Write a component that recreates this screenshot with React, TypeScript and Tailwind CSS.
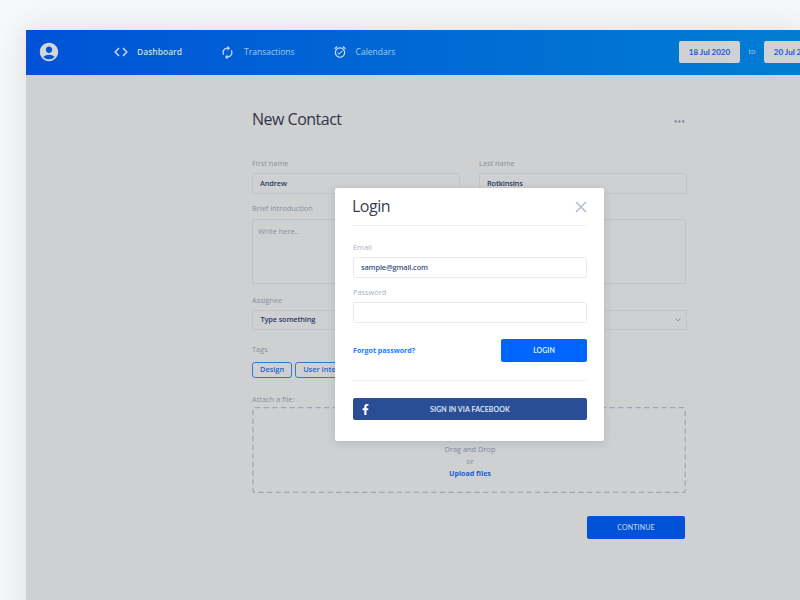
import type { ReactNode } from "react";
import {
  MdAccountCircle,
  MdAlarmOn,
  MdAutorenew,
  MdMoreHoriz,
} from "react-icons/md";
import { FaFacebookF } from "react-icons/fa";

function CodeIcon() {
  return (
    <svg
      className="h-[10px] w-[14px] shrink-0"
      viewBox="0 0 14 10"
      fill="none"
      stroke="currentColor"
      strokeWidth="1.5"
    >
      <path d="M5 1 1.2 5 5 9M9 1l3.8 4L9 9" />
    </svg>
  );
}

function NavItem({
  icon,
  label,
  className,
}: {
  icon: ReactNode;
  label: string;
  className: string;
}) {
  return (
    <a className={`flex items-center whitespace-nowrap ${className}`} href="#">
      {icon}
      {label}
    </a>
  );
}

function DateButton({ children }: { children: ReactNode }) {
  return (
    <button className="h-[22px] w-[61px] shrink-0 rounded-[2px] bg-[#cfd1d4] pb-px font-[Lato,sans-serif] text-[8px] font-bold whitespace-nowrap text-[#1258d6]">
      {children}
    </button>
  );
}

function Label({ children }: { children: ReactNode }) {
  return (
    <span className="block h-3 text-[7.4px] leading-3 text-[#8790a2]">
      {children}
    </span>
  );
}

function Field({ label, value }: { label: string; value: string }) {
  return (
    <label className="block w-[208px]">
      <Label>{label}</Label>
      <span className="mt-1 flex h-[21px] items-center rounded-[2px] border border-[#c1c4c9] px-[7px] text-[7.4px] font-semibold tracking-[-0.15px] text-[#283e66]">
        {value}
      </span>
    </label>
  );
}

function Tag({ children }: { children: ReactNode }) {
  return (
    <span className="flex h-4 items-center rounded-[3px] border border-[#3a75d6] px-[7px] pb-px text-[7.4px] font-semibold whitespace-nowrap text-[#2264d1]">
      {children}
    </span>
  );
}

function Header() {
  return (
    <header className="flex h-[45px] items-center bg-gradient-to-r from-[#0052d6] to-[#007dd2] pb-px text-[8.5px] text-[#a9c9ee]">
      <MdAccountCircle className="ml-3 size-[22px] shrink-0 text-[#d3d6dc]" />
      <NavItem
        className="ml-[53.5px] gap-[9.5px] font-semibold text-[#cbdaf0]"
        icon={<CodeIcon />}
        label="Dashboard"
      />
      <NavItem
        className="ml-[38px] gap-[9px]"
        icon={<MdAutorenew className="size-[15px] text-[#cbdaf0]" />}
        label="Transactions"
      />
      <NavItem
        className="ml-[38px] gap-[9px]"
        icon={<MdAlarmOn className="size-[14px] text-[#cbdaf0]" />}
        label="Calendars"
      />
      <div className="ml-auto flex w-[121px] items-center text-[7.5px]">
        <DateButton>18 Jul 2020</DateButton>
        <span className="w-6 shrink-0 text-center">to</span>
        <DateButton>20 Jul 2020</DateButton>
      </div>
    </header>
  );
}

function ContactForm() {
  return (
    <form className="ml-[226px] w-[435px] pt-8">
      <div className="flex h-6 items-center justify-between">
        <h1 className="text-[16px] leading-6 tracking-[-0.5px] text-[#33344b]">
          New Contact
        </h1>
        <MdMoreHoriz className="mt-1 size-[15px] text-[#8189a0]" />
      </div>
      <div className="mt-[26px] flex justify-between">
        <Field label="First name" value="Andrew" />
        <Field label="Last name" value="Rotkinsins" />
      </div>
      <div className="mt-2">
        <Label>Brief introduction</Label>
        <div className="mt-[5px] h-[65px] w-[434px] rounded-[2px] border border-[#bfc2c6] px-[5px] pt-[5px] text-[7.5px] leading-3 text-[#8790a2]">
          Write here..
        </div>
      </div>
      <div className="mt-[10px]">
        <Label>Assignee</Label>
        <div className="mt-1 flex h-[20px] items-center justify-between rounded-[2px] border border-[#c2c5c9] pr-[5px] pb-px pl-[7.5px] text-[7.4px] font-semibold tracking-[-0.15px] text-[#283e66]">
          Type something
          <svg
            className="h-1 w-[6px]"
            viewBox="0 0 6 4"
            fill="none"
            stroke="#8a94a8"
          >
            <path d="M.6.6 3 3 5.4.6" />
          </svg>
        </div>
      </div>
      <div className="mt-[13px]">
        <Label>Tags</Label>
        <div className="mt-[7px] flex gap-[3px]">
          <Tag>Design</Tag>
          <Tag>User Interface</Tag>
        </div>
      </div>
      <div className="mt-[15px]">
        <Label>Attach a file:</Label>
        <div className="relative mt-0.5 flex h-[86px] w-[434px] flex-col items-center pt-9 pl-0.5 text-[7.4px] leading-3 font-medium text-[#818b9c]">
          <svg className="absolute inset-0 size-full" fill="none">
            <rect
              x=".9"
              y=".7"
              width="432.3"
              height="84.6"
              rx="2"
              stroke="#9fa5b5"
              strokeWidth="1.2"
              strokeDasharray="5.3 3.35"
            />
          </svg>
          <span>Drag and Drop</span>
          <span>or</span>
          <a className="text-[7.1px] font-bold text-[#1560d8]" href="#">
            Upload files
          </a>
        </div>
      </div>
      <button className="mt-[23px] mr-[2px] ml-auto block h-[23px] w-[98px] rounded-[2px] bg-[#0052d6] font-[Lato,sans-serif] text-[7px] font-medium tracking-[0.15px] text-[#c5d6ef]">
        CONTINUE
      </button>
    </form>
  );
}

function LoginField({ label, value }: { label: string; value?: string }) {
  return (
    <label className="block">
      <span className="block h-3 text-[7.4px] leading-3 text-[#a9b2c2]">
        {label}
      </span>
      <span className="mt-1 flex h-[21px] items-center rounded-[2px] border border-[#e7eaf1] px-[7px] text-[7.4px] font-semibold tracking-[-0.15px] text-[#3b5380]">
        {value}
      </span>
    </label>
  );
}

function LoginDialog() {
  return (
    <div className="absolute top-[187.5px] left-[334.5px] h-[253px] w-[269.5px] rounded-[2px] bg-white pr-[17px] pl-[17.5px] shadow-[0_2px_8px_rgba(30,40,60,0.15)]">
      <div className="flex h-[37.5px] items-center justify-between">
        <h2 className="-mt-px text-[16px] leading-6 tracking-[-0.5px] text-[#3b3c54]">
          Login
        </h2>
        <svg
          className="mt-px size-3"
          viewBox="0 0 12 12"
          stroke="#b4bccf"
          strokeWidth="1.5"
        >
          <path d="m1 1 10 10M11 1 1 11" />
        </svg>
      </div>
      <div className="h-px bg-[#f0f1f4]" />
      <div className="flex flex-col gap-2 pt-[15px] pl-px">
        <LoginField label="Email" value="sample@gmail.com" />
        <LoginField label="Password" />
      </div>
      <div className="mt-4 flex items-center justify-between pl-px">
        <a className="text-[7.1px] font-bold text-[#167dff]" href="#">
          Forgot password?
        </a>
        <button className="h-[23px] w-[86px] rounded-[2px] bg-[#0066ff] font-[Lato,sans-serif] text-[7px] font-bold text-[#dceaff]">
          LOGIN
        </button>
      </div>
      <div className="mt-[18px] h-px bg-[#f0f1f4]" />
      <button className="relative mt-[17px] ml-px flex h-[22px] w-[234px] items-center justify-center rounded-[2px] bg-[#294e96] font-[Lato,sans-serif] text-[7px] font-bold tracking-[0.1px] text-[#dde4f1]">
        <FaFacebookF className="absolute left-[7px] size-[11px] text-white" />
        SIGN IN VIA FACEBOOK
      </button>
    </div>
  );
}

export default function App() {
  return (
    <div className="relative h-[600px] w-[800px] overflow-hidden bg-[#f6f8fa] pt-[30px] pl-[26px] font-['Open_Sans',sans-serif]">
      <main className="h-[640px] w-[774px] bg-[#cfd0d1] shadow-[0_0_30px_rgba(60,60,60,0.15)]">
        <Header />
        <ContactForm />
      </main>
      <LoginDialog />
    </div>
  );
}
